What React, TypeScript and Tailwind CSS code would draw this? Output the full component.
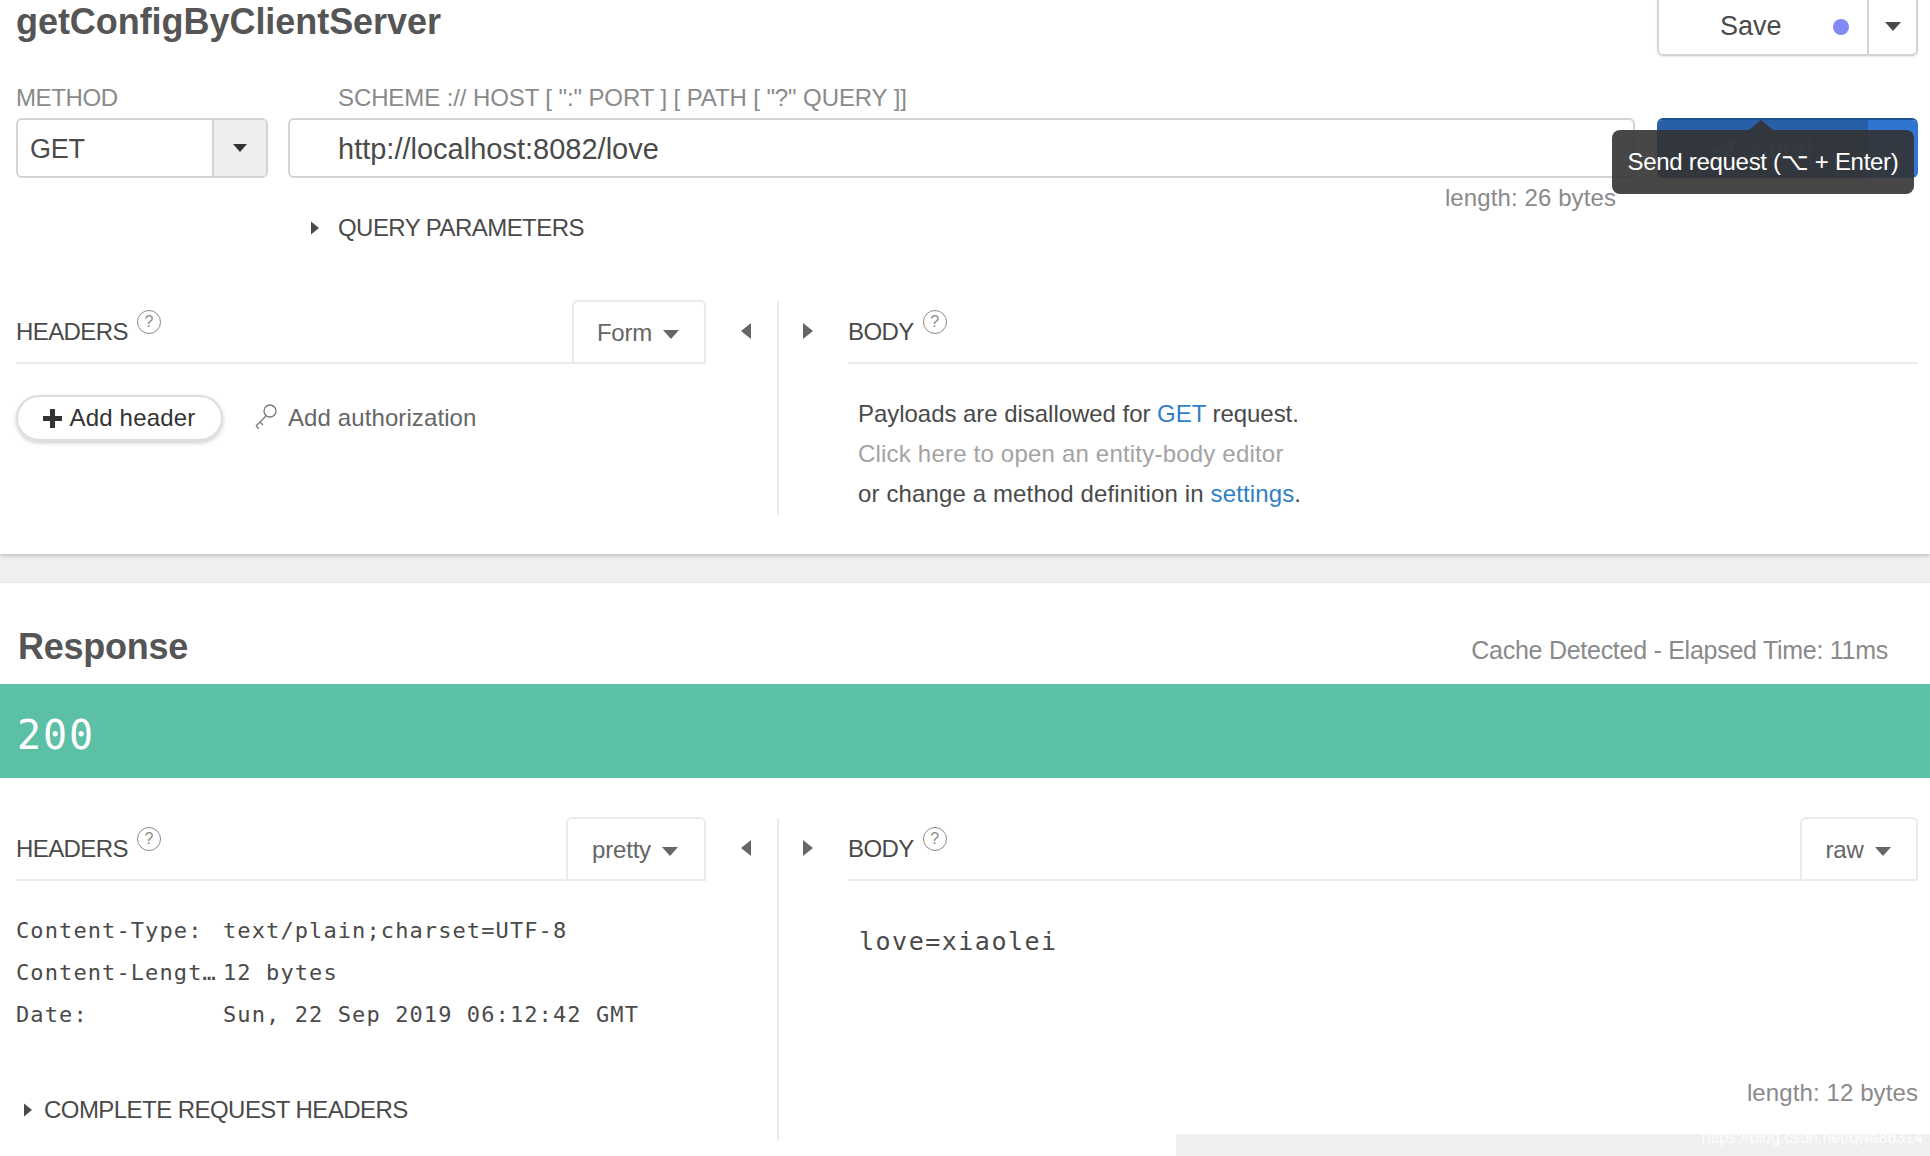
import React from 'react'

const sans = "font-['Liberation_Sans',Arial,sans-serif]"
const mono = "font-['DejaVu_Sans_Mono',monospace]"

function Caret({ dir = 'down', className = '' }: { dir?: 'down' | 'left' | 'right'; className?: string }) {
  const points = dir === 'down' ? '0,0 16,0 8,9' : dir === 'right' ? '0,0 10,8 0,16' : '10,0 0,8 10,16'
  const w = dir === 'down' ? 16 : 10
  const h = dir === 'down' ? 9 : 16
  return (
    <svg width={w} height={h} viewBox={`0 0 ${w} ${h}`} className={`shrink-0 ${className}`}>
      <polygon points={points} fill="currentColor" />
    </svg>
  )
}

function Help() {
  return (
    <span className="mb-[20px] ml-[9px] flex h-[24px] w-[24px] items-center justify-center rounded-full border border-[#8a8a8a] text-[16px] leading-none text-[#8a8a8a]">
      ?
    </span>
  )
}

function Tab({ label, width }: { label: string; width: string }) {
  return (
    <div className={`${width} flex h-[63px] items-center justify-center gap-[11px] rounded-t-[6px] border-x-2 border-t-2 border-[#ebebeb] pr-[2px] text-[24px] tracking-[-0.2px] text-[#666]`}>
      {label}
      <Caret className="mt-[3px] text-[#666]" />
    </div>
  )
}

function PaneHeader({ title, tab, tabWidth }: { title: string; tab?: string; tabWidth?: string }) {
  return (
    <div className="flex h-[63px] items-center justify-between border-b-2 border-[#ebebeb]">
      <div className="flex items-center pt-[1px]">
        <span className="text-[24px] tracking-[-0.6px] text-[#4a4a4a]">{title}</span>
        <Help />
      </div>
      {tab && tabWidth && <Tab label={tab} width={tabWidth} />}
    </div>
  )
}

function Splitter({ height }: { height: string }) {
  return (
    <div className={`${height} flex w-[142px] shrink-0 pt-[22px] text-[#666]`}>
      <div className="w-[71px] pl-[35px]">
        <Caret dir="left" />
      </div>
      <div className={`${height} -mt-[22px] w-[2px] bg-[#ebebeb]`} />
      <div className="pl-[24px]">
        <Caret dir="right" />
      </div>
    </div>
  )
}

export default function App() {
  return (
    <div className={`${sans} relative h-[1156px] w-full overflow-hidden bg-white text-[#4a4a4a]`}>
      <section className="relative z-10 h-[554px] shadow-[0_2px_4px_rgba(0,0,0,0.2)]">
        <div className="flex h-[84px] justify-between pl-[16px] pr-[12px]">
          <h1 className="text-[36px] font-bold leading-[44px] tracking-[-0.05px] text-[#555]">getConfigByClientServer</h1>
          <div className="-mt-[10px] flex h-[66px] w-[261px] rounded-[6px] border-2 border-[#d4d4d4] shadow-[0_1px_2px_rgba(0,0,0,0.1)]">
            <div className="flex flex-1 items-center pl-[61px] pt-[7px] text-[27px]">
              Save
              <span className="ml-[51px] h-[16px] w-[16px] rounded-full bg-[#8189f5]" />
            </div>
            <div className="flex w-[49px] items-center justify-center border-l-2 border-[#d4d4d4] pt-[7px] text-[#4a4a4a]">
              <Caret />
            </div>
          </div>
        </div>

        <div className="flex pl-[16px] pr-[12px]">
          <div className="w-[252px]">
            <div className="h-[34px] text-[24px] leading-[28px] tracking-[-0.4px] text-[#8a8a8a]">METHOD</div>
            <div className="flex h-[60px] overflow-hidden rounded-[6px] border-2 border-[#d4d4d4]">
              <div className="flex flex-1 items-center pl-[12px] pt-[2px] text-[27px] tracking-[-0.3px]">GET</div>
              <div className="flex w-[54px] items-center justify-center border-l-2 border-[#d4d4d4] bg-[#eeeeee] text-[#333]">
                <Caret className="h-[8px] w-[14px]" />
              </div>
            </div>
          </div>
          <div className="ml-[20px] w-[1347px]">
            <div className="h-[34px] pl-[50px] text-[24px] leading-[28px] tracking-[-0.1px] text-[#8a8a8a]">
              SCHEME :// HOST [ ":" PORT ] [ PATH [ "?" QUERY ]]
            </div>
            <div className="flex h-[60px] items-center rounded-[6px] border-2 border-[#d4d4d4] pl-[48px] pt-[3px] text-[29px]">
              http://localhost:8082/love
            </div>
            <div className="flex h-[40px] items-center justify-end pr-[19px] text-[24px] tracking-[0.1px] text-[#8a8a8a]">length: 26 bytes</div>
          </div>
          <div className="relative ml-[22px] mt-[34px] h-[60px] w-[261px]">
            <div className="flex h-full overflow-hidden rounded-[6px] border-t-2 border-[#1d5394] text-[#4d7fbd]">
              <div className="flex flex-1 items-center justify-center gap-[14px] bg-[#285fa6] text-[27px]">
                <svg width="24" height="22" viewBox="0 0 24 22">
                  <polygon points="24,0 0,13 7,16 20,4 10,17 10,22 14,18 19,20" fill="currentColor" />
                </svg>
                Send
              </div>
              <div className="flex w-[50px] items-center justify-center bg-[#2f75d1]">
                <Caret />
              </div>
            </div>
            <div className="absolute -left-[45px] top-[12px] flex h-[64px] w-[302px] items-center justify-center rounded-[8px] bg-[#333]/90 text-[24px] tracking-[-0.3px] text-white">
              <span className="absolute -top-[10px] left-[137px] h-0 w-0 border-x-[12px] border-b-[10px] border-x-transparent border-b-[#333]/90" />
              Send request (⌥ + Enter)
            </div>
          </div>
        </div>

        <div className="-mt-[10px] flex h-[40px] items-center gap-[19px] pl-[311px] text-[24px] tracking-[-0.55px]">
          <Caret dir="right" className="h-[14px] w-[8px]" />
          QUERY PARAMETERS
        </div>

        <div className="mt-[53px] flex pl-[16px] pr-[12px]">
          <div className="w-[690px] shrink-0">
            <PaneHeader title="HEADERS" tab="Form" tabWidth="w-[134px]" />
            <div className="mt-[31px] flex items-center">
              <button className="flex h-[46px] w-[207px] items-center justify-center gap-[7px] rounded-full border-2 border-[#ddd] text-[24px] tracking-[0.2px] text-[#333] shadow-[0_2px_4px_rgba(0,0,0,0.2)]">
                <svg width="19" height="19" viewBox="0 0 19 19">
                  <path d="M7 0h5v7h7v5h-7v7H7v-7H0V7h7z" fill="currentColor" />
                </svg>
                Add header
              </button>
              <svg width="24" height="26" viewBox="0 0 24 26" className="ml-[31px] mb-[4px] text-[#777]" fill="none" stroke="currentColor" strokeWidth="1.3">
                <circle cx="16" cy="8" r="6" />
                <path d="M12 13L2 23M6 19l3 3M2 23l3 3" />
              </svg>
              <span className="ml-[10px] text-[24px] tracking-[0.1px] text-[#666]">Add authorization</span>
            </div>
          </div>
          <Splitter height="h-[214px]" />
          <div className="flex-1">
            <PaneHeader title="BODY" />
            <div className="mt-[30px] pl-[10px] text-[24px] leading-[40px]">
              <p className="tracking-[-0.04px]">
                Payloads are disallowed for <span className="text-[#2f7fc8]">GET</span> request.
              </p>
              <p className="tracking-[0.2px] text-[#a3a3a3]">Click here to open an entity-body editor</p>
              <p className="tracking-[0.13px]">
                or change a method definition in <span className="text-[#2f7fc8]">settings</span>.
              </p>
            </div>
          </div>
        </div>
      </section>

      <div className="h-[29px] border-b border-[#e6e6e6] bg-[#f0f0f0]" />

      <section className="relative">
        <div className="flex h-[101px] items-center justify-between pl-[18px] pr-[42px] pt-[26px]">
          <h2 className="text-[36px] font-bold tracking-[-0.25px] text-[#555]">Response</h2>
          <span className="pt-[8px] text-[25px] tracking-[-0.27px] text-[#8a8a8a]">Cache Detected - Elapsed Time: 11ms</span>
        </div>
        <div className={`${mono} flex h-[94px] items-center bg-[#5bc0a6] pl-[17px] pt-[8px] text-[40px] tracking-[1.9px] text-white`}>200</div>

        <div className="mt-[40px] flex pl-[16px] pr-[12px]">
          <div className="w-[690px] shrink-0">
            <PaneHeader title="HEADERS" tab="pretty" tabWidth="w-[140px]" />
            <div className={`${mono} mt-[29px] text-[22px] leading-[42px] tracking-[1.1px] whitespace-pre`}>
              <div className="flex">
                <span className="w-[207px]">Content-Type:</span>
                <span>text/plain;charset=UTF-8</span>
              </div>
              <div className="flex">
                <span className="w-[207px]">Content-Lengt…</span>
                <span>12 bytes</span>
              </div>
              <div className="flex">
                <span className="w-[207px]">Date:</span>
                <span>Sun, 22 Sep 2019 06:12:42 GMT</span>
              </div>
            </div>
            <div className="mt-[56px] flex items-center gap-[12px] pl-[8px] text-[24px] tracking-[-0.55px]">
              <Caret dir="right" className="h-[14px] w-[8px]" />
              COMPLETE REQUEST HEADERS
            </div>
          </div>
          <Splitter height="h-[322px]" />
          <div className="flex-1">
            <PaneHeader title="BODY" tab="raw" tabWidth="w-[118px]" />
            <div className={`${mono} mt-[42px] pl-[11px] text-[25px] tracking-[1.5px]`}>love=xiaolei</div>
            <div className="mt-[114px] text-right text-[24px] tracking-[0.1px] text-[#8a8a8a]">length: 12 bytes</div>
          </div>
        </div>
      </section>

      <div className="absolute bottom-0 right-0 h-[22px] w-[754px] bg-[#f0f0f0]" />
      <span className="absolute bottom-[6px] right-[7px] text-[16px] text-white/80">https://blog.csdn.net/qwe86314</span>
    </div>
  )
}
